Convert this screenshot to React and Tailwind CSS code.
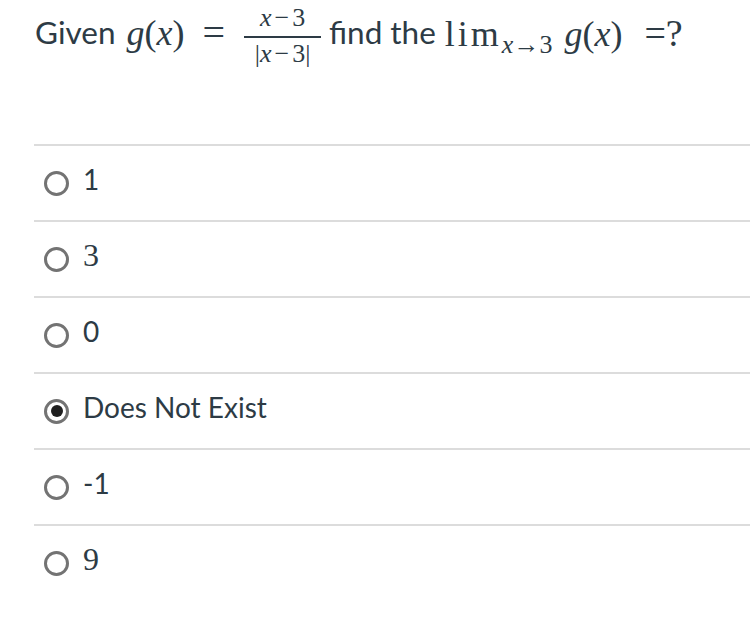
const options = [
  { label: "1", math: false },
  { label: "3", math: true },
  { label: "0", math: false },
  { label: "Does Not Exist", math: false, checked: true },
  { label: "-1", math: false },
  { label: "9", math: true },
];

function Radio({ checked }) {
  return (
    <span className="flex h-[25px] w-[25px] shrink-0 items-center justify-center rounded-full border-[3px] border-[#737373]">
      {checked && <span className="h-[12px] w-[12px] rounded-full bg-[#1f1f1f]" />}
    </span>
  );
}

const mathFont = "font-['Liberation_Serif',serif]";

export default function App() {
  return (
    <div className="min-h-[618px] bg-white text-[#2d3b45] font-['Lato',sans-serif]">
      {/* QUESTION */}
      <div className="flex h-[66px] items-center pl-[35px] text-[31.5px] leading-none">
        <span>Given</span>
        <span className={`${mathFont} ml-[11px] text-[36px]`}>
          <i>g</i>(<i>x</i>)
        </span>
        <span className={`${mathFont} ml-[18px] mr-[19px] text-[40px]`}>=</span>
        <span className={`${mathFont} mt-[6px] flex w-[77px] flex-col items-center text-[26px] leading-none`}>
          <span className="pb-[5px]">
            <i>x</i>
            <span className="mx-[3px]">−</span>3
          </span>
          <span className="h-[2px] w-full bg-[#2d3b45]" />
          <span className="pt-[3px]">
            |<i>x</i>
            <span className="mx-[3px]">−</span>3|
          </span>
        </span>
        <span className="ml-[8px]">find the</span>
        <span className={`${mathFont} ml-[9px] text-[36px]`}>
          <span className="tracking-[3px]">lim</span>
          <sub className="text-[26px]">
            <i>x</i>→3
          </sub>
          <span className="ml-[12px]">
            <i>g</i>(<i>x</i>)
          </span>
          <span className="ml-[22px] text-[38px]">=?</span>
        </span>
      </div>

      {/* OPTIONS */}
      <div className="mt-[78px] ml-[34px]">
        {options.map((o, i) => (
          <div
            key={i}
            className="flex h-[76px] items-center gap-[14px] border-t-2 border-[#dcdcdc] pl-[10px]"
          >
            <Radio checked={o.checked} />
            <span
              className={`mb-[9px] ${o.math ? `${mathFont} text-[32px]` : "text-[28px]"}`}
            >
              {o.label}
            </span>
          </div>
        ))}
      </div>
    </div>
  );
}
